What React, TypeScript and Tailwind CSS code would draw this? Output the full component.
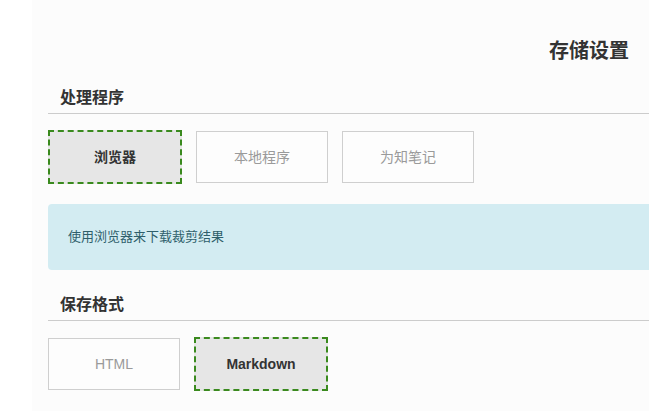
const font = { fontFamily: '"Liberation Sans", "Noto Sans CJK SC", sans-serif' };

type Opt = { label: string; active?: boolean };

function OptionRow({ options }: { options: Opt[] }) {
  return (
    <div className="flex h-[54px] items-center gap-[14px]">
      {options.map((o) =>
        o.active ? (
          <button
            key={o.label}
            type="button"
            className="box-border flex h-[54px] w-[134px] items-center justify-center border-2 border-dashed border-[#3a8a1e] bg-[#e6e6e6] text-[14px] font-bold text-[#333]"
          >
            {o.label}
          </button>
        ) : (
          <button
            key={o.label}
            type="button"
            className="box-border flex h-[52px] w-[132px] items-center justify-center border border-[#cfcfcf] bg-[#fdfdfd] text-[14px] text-[#9a9a9a]"
          >
            {o.label}
          </button>
        )
      )}
    </div>
  );
}

function SectionTitle({ children, className = '' }: { children: string; className?: string }) {
  return (
    <div className={`border-b border-[#cccccc] pb-[3px] pl-[12px] ${className}`}>
      <h2 className="text-[16px] font-bold leading-[24px] text-[#333]">{children}</h2>
    </div>
  );
}

export default function App() {
  return (
    <div className="flex h-screen w-full overflow-hidden bg-[#fcfcfc]" style={font}>
      <div className="w-[32px] shrink-0 bg-white" />
      <div className="flex-1 pl-[16px]">
        <h1 className="pr-[20px] pt-[37px] text-right text-[20px] font-bold leading-[28px] text-[#333]">
          存储设置
        </h1>

        <SectionTitle className="mt-[21px]">处理程序</SectionTitle>
        <div className="mt-[16px]">
          <OptionRow
            options={[{ label: '浏览器', active: true }, { label: '本地程序' }, { label: '为知笔记' }]}
          />
        </div>

        <div className="mr-[-8px] mt-[20px] flex h-[66px] items-center rounded-[4px] bg-[#d3ecf2] pl-[20px] text-[13px] text-[#2f5f6b]">
          使用浏览器来下载裁剪结果
        </div>

        <SectionTitle className="mt-[23px]">保存格式</SectionTitle>
        <div className="mt-[16px]">
          <OptionRow options={[{ label: 'HTML' }, { label: 'Markdown', active: true }]} />
        </div>
      </div>
    </div>
  );
}
